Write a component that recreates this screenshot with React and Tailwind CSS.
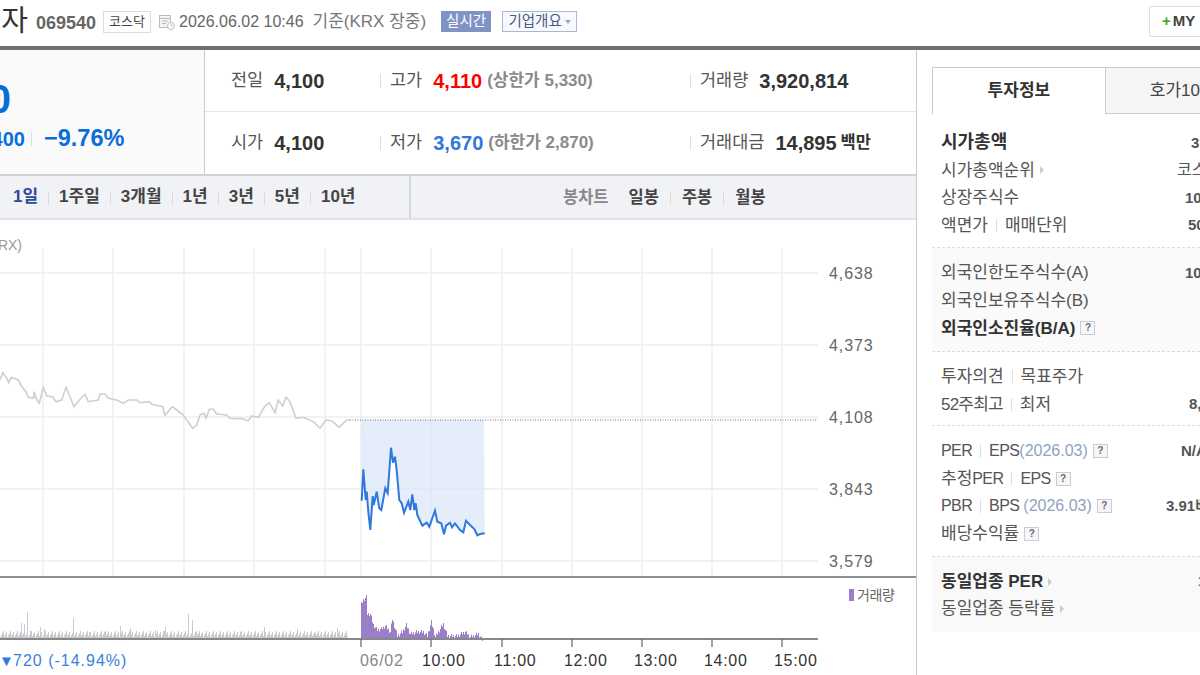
const blueLine = [[365,362],[370,268],[377,360],[380,335],[385,395],[391,450],[398,348],[401,375],[410,335],[418,385],[424,390],[436,325],[443,340],[453,203],[459,248],[465,230],[470,270],[478,360],[485,370],[492,398],[505,365],[511,390],[517,343],[523,390],[527,370],[532,405],[547,437],[560,428],[568,440],[585,392],[592,425],[604,430],[612,463],[618,437],[630,428],[636,442],[645,430],[660,450],[670,457],[678,422],[690,435],[703,447],[712,466],[720,462],[734,460]]
  .map(([x, y]) => [240 + x / 3, 380 + y / 3]);

const grayLeft = [[0,60],[8,38],[18,50],[26,68],[34,52],[55,60],[65,80],[78,95],[85,112],[100,115],[103,95],[108,115],[118,130],[130,82],[140,108],[158,110],[168,125],[185,120],[198,82],[210,110],[222,140],[240,118],[255,103],[265,125],[295,120],[300,102],[315,102],[325,115],[350,120],[370,130],[385,120],[410,120],[420,128],[448,125],[455,133],[488,140],[495,166],[517,140],[530,150],[550,165],[578,205],[590,195],[600,165],[612,160],[618,175],[628,148],[640,148],[650,162],[680,165],[690,175],[715,176]]
  .map(([x, y]) => [x / 3, 360 + y / 3]);
const grayRight = [[0,115],[25,122],[35,108],[55,112],[75,78],[88,68],[105,98],[115,60],[128,78],[138,52],[150,65],[168,115],[190,112],[220,125],[240,145],[258,120],[275,122],[297,142],[320,120],[330,120]]
  .map(([x, y]) => [240 + x / 3, 380 + y / 3]);

const toPath = (pts) => pts.map(([x, y]) => `${x.toFixed(1)},${y.toFixed(1)}`).join(" ");

const purpleTops = [[361,602],[363,598],[366,595],[367,612],[370,612],[373,623],[377,628],[381,627],[385,624],[390,630],[392,617],[397,634],[402,630],[406,623],[410,632],[417,630],[423,630],[427,634],[431,620],[435,635],[443,622],[447,634],[457,634],[465,630],[470,635],[478,632],[482,638]];

const topAt = (x) => {
  for (let i = 0; i < purpleTops.length - 1; i++) {
    const [x1, y1] = purpleTops[i];
    const [x2, y2] = purpleTops[i + 1];
    if (x >= x1 && x <= x2) return y1 + ((y2 - y1) * (x - x1)) / (x2 - x1);
  }
  return 638;
};

const graySpikes = { 21: 623, 24: 624, 27: 612, 30: 631, 40: 627, 44: 629, 73: 618, 89: 632, 105: 631, 120: 626, 130: 628, 155: 630, 163: 631, 165: 627, 188: 614, 192: 620, 196: 631, 240: 632, 264: 627, 297: 629, 315: 633, 337: 628, 345: 633 };

const grayBars = Array.from({ length: 348 }, (_, x) => [x, graySpikes[x] ?? 637 - ((x * 37) % 7)]);
const purpleBars = Array.from({ length: 122 }, (_, i) => [361 + i, topAt(361 + i) + (i * 13) % 5]);

const hLines = [273, 345, 417, 489, 561];
const vLines = [43, 113, 184, 254, 325, 361, 431, 502, 572, 642, 712, 782];
const priceLabels = [["4,638", 273], ["4,373", 345], ["4,108", 417], ["3,843", 489], ["3,579", 561]];
const timeLabels = [["10:00", 422], ["11:00", 494], ["12:00", 564], ["13:00", 634], ["14:00", 704], ["15:00", 774]];
const timeTicks = [361, 431, 502, 572, 642, 712, 782];

const Chart = () => (
  <div className="h-[455px] overflow-hidden">
    <svg width="916" height="455" viewBox="0 220 916 455" className="block">
      <text x="22" y="250" textAnchor="end" fontSize="14" fill="#999">RX)</text>
      {hLines.map((y) => (
        <line key={y} x1="0" x2="818" y1={y} y2={y} stroke="#eeeeee" strokeWidth="1.5" />
      ))}
      {vLines.map((x) => (
        <line key={x} x1={x} x2={x} y1="248" y2="577" stroke="#eeeeee" strokeWidth="1.5" />
      ))}
      <polygon points={`361,420 ${toPath(blueLine)} 484,420`} fill="#d9e5f6" fillOpacity="0.7" />
      <polyline points={toPath([...grayLeft, ...grayRight])} fill="none" stroke="#cccfd4" strokeWidth="1.6" />
      <line x1="350" x2="818" y1="420" y2="420" stroke="#777" strokeDasharray="1 1.5" />
      <polyline points={toPath(blueLine)} fill="none" stroke="#2f78dc" strokeWidth="2" />
      {priceLabels.map(([label, y]) => (
        <text key={label} x="829" y={y + 6} fontSize="16" letterSpacing="0.9" fill="#666">{label}</text>
      ))}
      <rect x="0" y="576" width="916" height="2" fill="#8c9094" />
      {grayBars.map(([x, y]) => (
        <line key={x} x1={x + 0.5} x2={x + 0.5} y1={y} y2="639" stroke="#c9cbce" />
      ))}
      {purpleBars.map(([x, y]) => (
        <line key={x} x1={x + 0.5} x2={x + 0.5} y1={y} y2="639" stroke="#9a7fc6" />
      ))}
      <rect x="0" y="638" width="818" height="2" fill="#85888c" />
      {timeTicks.map((x) => (
        <line key={x} x1={x} x2={x} y1="639" y2="647" stroke="#666" strokeWidth="1.2" />
      ))}
      <rect x="849" y="589" width="5" height="12" fill="#9a7fc6" />
      <text x="857" y="600" fontSize="14" letterSpacing="-0.4" fill="#666">거래량</text>
      <text x="-1" y="666" fontSize="15" fill="#2f78dc">▼</text>
      <text x="13" y="666" fontSize="16" letterSpacing="1" fill="#3b7fdc">720 (-14.94%)</text>
      <text x="360" y="666" fontSize="16" letterSpacing="0.7" fill="#888">06/02</text>
      {timeLabels.map(([label, x]) => (
        <text key={label} x={x} y="666" fontSize="16" letterSpacing="0.7" fill="#333">{label}</text>
      ))}
    </svg>
  </div>
);

const Sep = () => <span className="inline-block w-px h-[14px] bg-[#dddddd]" />;

const Help = () => (
  <span className="ml-[5px] inline-flex items-center justify-center w-[15px] h-[14px] border border-[#cccccc] bg-[#f6f6f6] text-[10px] font-bold leading-none text-[#5b6b8a]">?</span>
);

const Arrow = () => (
  <span className="ml-[5px] inline-block border-y-[4px] border-l-[4px] border-y-transparent border-l-[#cccccc]" />
);

const Row = ({ value, valueClass, bold, children }) => (
  <div className="flex h-[27.6px] items-center justify-between">
    <div className={`flex items-center whitespace-nowrap ${bold ? "font-bold text-[#333333]" : "text-[#555555]"}`}>{children}</div>
    {value && <div className={`whitespace-nowrap font-bold text-[15px] text-[#555555] ${valueClass}`}>{value}</div>}
  </div>
);

const InfoSep = () => <span className="mx-[8px] inline-block w-px h-[13px] bg-[#dddddd]" />;

const Latin = ({ children }) => <span className="text-[16px] tracking-[-0.6px]">{children}</span>;

const Year = ({ className }) => <span className={`text-[16px] text-[#8fa3c4] ${className}`}>(2026.03)</span>;

const InfoPanel = () => (
  <div className="flex-1 overflow-hidden pt-[17px] pl-[15px]">
    <div className="flex h-[47px] text-[17px]">
      <div className="w-[174px] flex items-center justify-center border-t border-l border-[#cccccc] font-bold text-[#333333]">투자정보</div>
      <div className="flex-1 flex items-center pl-[44px] whitespace-nowrap border border-r-0 border-[#cccccc] bg-[#f5f5f5] text-[#444444]">호가10</div>
    </div>
    <div className="text-[17px]">
      <div className="pt-[15px] pb-[8px] pl-[9px] border-b border-dashed border-[#dddddd]">
        <Row bold value="3" valueClass="w-[9px] text-[#333333]"><span className="text-[18px]">시가총액</span></Row>
        <Row value="코스닥" valueClass="w-[23px] font-normal text-[16px]">시가총액순위<Arrow /></Row>
        <Row value="10" valueClass="w-[15px]">상장주식수</Row>
        <Row value="50" valueClass="w-[12px]">액면가<InfoSep />매매단위</Row>
      </div>
      <div className="pt-[11px] pb-[9px] pl-[9px] bg-[#fafafa] border-b border-dashed border-[#dddddd]">
        <Row value="10" valueClass="w-[15px]">외국인한도주식수(A)</Row>
        <Row>외국인보유주식수(B)</Row>
        <Row bold>외국인소진율(B/A)<Help /></Row>
      </div>
      <div className="pt-[11px] pb-[7px] pl-[9px] border-b border-dashed border-[#dddddd]">
        <Row>투자의견<InfoSep />목표주가</Row>
        <Row value="8," valueClass="w-[11px]"><span className="tracking-[-0.8px]">52주최고</span><InfoSep />최저</Row>
      </div>
      <div className="pt-[11px] pb-[8px] pl-[9px] border-b border-dashed border-[#dddddd]">
        <Row value="N/A" valueClass="w-[19px]"><Latin>PER</Latin><InfoSep /><Latin>EPS</Latin><Year /><Help /></Row>
        <Row>추정<Latin>PER</Latin><InfoSep /><Latin>EPS</Latin><Help /></Row>
        <Row value="3.91배" valueClass="w-[34px]"><Latin>PBR</Latin><InfoSep /><Latin>BPS</Latin><Year className="ml-[4px]" /><Help /></Row>
        <Row>배당수익률<Help /></Row>
      </div>
      <div className="pt-[11px] pb-[9px] pl-[9px] bg-[#f9f9f9]">
        <Row bold value="1" valueClass="w-[2px]">동일업종 PER<Arrow /></Row>
        <Row>동일업종 등락률<Arrow /></Row>
      </div>
    </div>
  </div>
);

const Stat = ({ label, value, valueClass = "text-[#333333]", sub, subUnit, className }) => (
  <div className={`flex items-center whitespace-nowrap ${className}`}>
    <span className="text-[17.5px] text-[#555555]">{label}</span>
    <span className={`ml-[11px] text-[20px] font-bold ${valueClass}`}>{value}</span>
    {subUnit && <span className="ml-[4px] text-[16.5px] font-bold text-[#333333]">{subUnit}</span>}
    {sub && <span className="ml-[5px] text-[17px] font-bold text-[#8a8a8a]">{sub}</span>}
  </div>
);

const periods = ["1일", "1주일", "3개월", "1년", "3년", "5년", "10년"];

const App = () => (
  <div className="w-[1200px] h-[675px] overflow-hidden bg-white font-['Liberation_Sans','Noto_Sans_CJK_KR',sans-serif]">
    <div className="flex h-[50px] items-center border-b-[4px] border-[#6c7177] pb-[3px] whitespace-nowrap">
      <span className="w-[28px] flex justify-end text-[29px] leading-none text-[#333333]">자</span>
      <span className="ml-[8px] w-[61px] mt-[3px] text-[18px] font-bold text-[#666666]">069540</span>
      <span className="ml-[6px] flex items-center justify-center w-[48px] h-[22px] border border-[#dddddd] text-[13px] text-[#444444]">코스닥</span>
      <svg width="18" height="18" viewBox="0 0 18 18" className="ml-[7px]" fill="none" stroke="#b9bcc2">
        <rect x="1.5" y="2.5" width="11" height="12" fill="#f3f3f3" />
        <path d="M1.5 5.5h11M4 8h6M4 10.5h4" />
        <circle cx="13" cy="13" r="3.5" fill="#fff" />
        <path d="M13 11v2h2" />
      </svg>
      <span className="ml-[3px] text-[16px] text-[#666666]">2026.06.02 10:46</span>
      <span className="ml-[9px] text-[17px] text-[#777777]">기준(KRX 장중)</span>
      <span className="ml-[15px] flex items-center justify-center w-[50px] h-[21px] bg-[#7f93c4] text-[14.5px] text-white">실시간</span>
      <span className="ml-[11px] flex items-center justify-center gap-[3px] w-[75px] h-[21px] border border-[#aab7d8] bg-[#f8f9fc] text-[14.5px] text-[#4a5a8a]">
        기업개요
        <span className="border-x-[3px] border-t-[4px] border-x-transparent border-t-[#9aa5c0]" />
      </span>
      <span className="ml-auto flex items-center w-[51px] h-[31px] pl-[12px] border border-r-0 border-[#dddddd] rounded-l-[2px] text-[15px] font-bold text-[#444444]">
        <span className="text-[#3aa51a] mr-[2px]">+</span>MY
      </span>
    </div>

    <div className="flex h-[625px]">
      <div className="w-[917px] border-r border-[#cccccc]">
        <div className="flex h-[126px] border-b-[2px] border-[#cfd2d6]">
          <div className="w-[205px] pt-[26px] bg-[#fafafa] border-r border-[#cccccc] whitespace-nowrap">
            <div className="w-[11px] h-[46px] flex justify-end items-center text-[40px] font-bold text-[#0a6ed8]">3,700</div>
            <div className="flex items-center -mt-[1px]">
              <span className="w-[25px] flex justify-end text-[20px] font-bold text-[#0a6ed8]">▼400</span>
              <span className="ml-[6px] mr-[12px] w-px h-[14px] bg-[#dddddd]" />
              <span className="text-[23.5px] font-bold text-[#0a6ed8]">−9.76%</span>
            </div>
          </div>
          <div className="flex-1">
            <div className="flex h-[62px] items-center border-b border-[#e5e5e5] pl-[26px]">
              <Stat className="w-[149px]" label="전일" value="4,100" />
              <Sep />
              <Stat className="w-[309px] pl-[9px]" label="고가" value="4,110" valueClass="text-[#ff0000]" sub="(상한가 5,330)" />
              <Sep />
              <Stat className="pl-[9px]" label="거래량" value="3,920,814" />
            </div>
            <div className="flex h-[61px] items-center pl-[26px]">
              <Stat className="w-[149px]" label="시가" value="4,100" />
              <Sep />
              <Stat className="w-[309px] pl-[9px]" label="저가" value="3,670" valueClass="text-[#2f78dc]" sub="(하한가 2,870)" />
              <Sep />
              <Stat className="pl-[9px]" label="거래대금" value="14,895" subUnit="백만" />
            </div>
          </div>
        </div>

        <div className="flex h-[44px] bg-[#f0f2f6] border-b-[2px] border-[#dfe1e5] text-[16.5px] font-bold text-[#444444]">
          <div className="w-[411px] flex items-center pl-[13px] gap-[10px] border-r-[2px] border-[#d5d8dc] whitespace-nowrap text-[17px]">
            {periods.map((p, i) => (
              <div key={p} className="flex items-center gap-[10px]">
                {i > 0 && <span className="w-px h-[13px] bg-[#d8dade]" />}
                <span className={i === 0 ? "text-[#2e4a9a]" : ""}>{p}</span>
              </div>
            ))}
          </div>
          <div className="flex items-center pl-[152px] whitespace-nowrap">
            <span className="text-[#888888]">봉차트</span>
            <span className="ml-[20px]">일봉</span>
            <span className="mx-[11px] w-px h-[13px] bg-[#d8dade]" />
            <span>주봉</span>
            <span className="mx-[11px] w-px h-[13px] bg-[#d8dade]" />
            <span>월봉</span>
          </div>
        </div>

        <Chart />
      </div>

      <InfoPanel />
    </div>
  </div>
);

export default App;
